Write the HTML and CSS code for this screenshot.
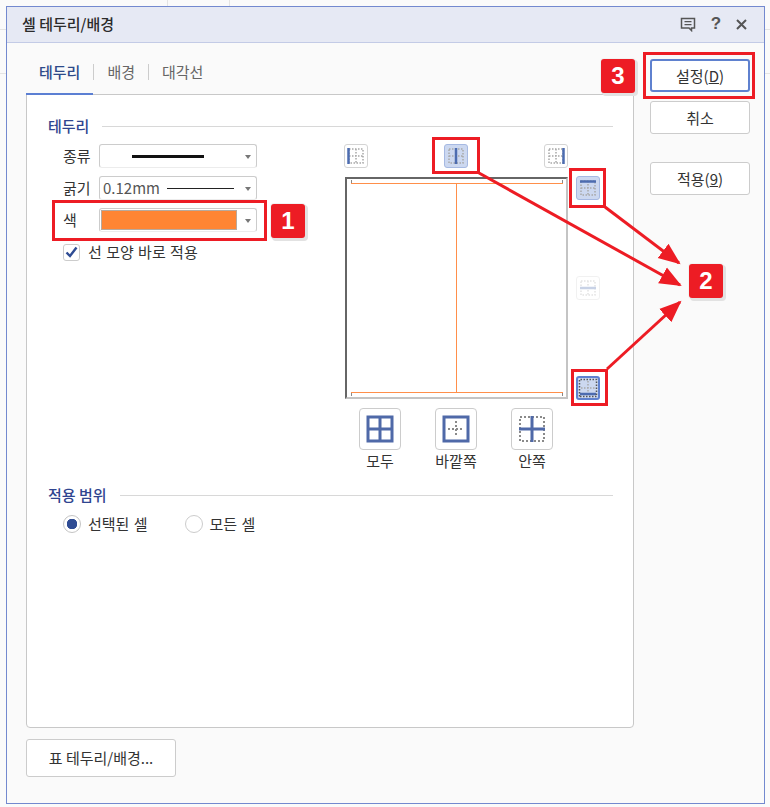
FILE: index.html
```html
<!DOCTYPE html>
<html>
  <head>
    <title>셀 테두리/배경</title>

    <link rel="stylesheet" href="styles.css">
  </head>
  <body>

    <div class="dialog">
      <div class="titlebar">
        <div class="title">셀 테두리/배경</div>
        <div class="title-icons">
          <svg class="icon-comment" width="16" height="15" viewBox="0 0 16 15">
            <path d="M1.5 1.5h13v9.5h-3v2.5l-2.5-2.5h-7.500z" fill="none" stroke="#555" stroke-width="1.500"/>
            <path d="M4.500 4.700h7M4.500 7.700h7" stroke="#555" stroke-width="1.300"/>
          </svg>
          <span class="icon-help">?</span>
          <svg class="icon-close" width="11" height="11" viewBox="0 0 11 11">
            <path d="M1 1l9 9M10 1l-9 9" stroke="#555" stroke-width="2"/>
          </svg>
        </div>
      </div>

      <div class="content">
        <div class="main">
          <div class="tabs">
            <div class="tab active">테두리</div>
            <span class="sep"></span>
            <div class="tab">배경</div>
            <span class="sep"></span>
            <div class="tab">대각선</div>
          </div>

          <div class="panel">
            <div class="legend"><span>테두리</span><i></i></div>

            <div class="border-area">
              <div class="fields">
                <div class="field">
                  <label>종류</label>
                  <div class="select"><div class="line-thick"></div><b class="caret"></b></div>
                </div>
                <div class="field">
                  <label>굵기</label>
                  <div class="select"><span class="size">0.12mm</span><div class="line-thin"></div><b class="caret"></b></div>
                </div>
                <div class="field">
                  <label>색</label>
                  <div class="select"><div class="swatch"></div><b class="caret"></b></div>
                </div>
                <div class="check-row">
                  <span class="checkbox">
                    <svg width="13" height="12" viewBox="0 0 13 12"><path d="M1.500 6.500l3.500 3.500 6.500-8.500" fill="none" stroke="#2f4c94" stroke-width="2.400"/></svg>
                  </span>
                  선 모양 바로 적용
                </div>
              </div>

              <div class="preview">
                <div class="top-icons">
                  <div class="ico">
                    <svg width="24" height="24" viewBox="0 0 24 24"><path class="dots" d="M5 5h14v14H5zM12 5v14M5 12h14"/><path class="solid" d="M4.500 4v16"/></svg>
                  </div>
                  <div class="ico on">
                    <svg width="24" height="24" viewBox="0 0 24 24"><path class="dots" d="M5 5h14v14H5zM5 12h14"/><path class="solid" d="M12 4v16"/></svg>
                  </div>
                  <div class="ico">
                    <svg width="24" height="24" viewBox="0 0 24 24"><path class="dots" d="M5 5h14v14H5zM12 5v14M5 12h14"/><path class="solid" d="M19.500 4v16"/></svg>
                  </div>
                </div>

                <div class="sheet">
                  <div class="rule-top"></div>
                  <div class="rule-mid"></div>
                  <div class="rule-bottom"></div>
                  <span class="tick tick-tl"></span>
                  <span class="tick tick-tr"></span>
                  <span class="tick tick-bl"></span>
                  <span class="tick tick-br"></span>
                </div>

                <div class="side-icons">
                  <div class="ico on">
                    <svg width="24" height="24" viewBox="0 0 24 24"><path class="dots" d="M5 5h14v14H5zM12 5v14M5 12h14"/><path class="solid" d="M4 5.500h16"/></svg>
                  </div>
                  <div class="ico off">
                    <svg width="24" height="24" viewBox="0 0 24 24"><path class="dots" d="M5 5h14v14H5zM12 5v14"/><path class="solid" d="M4 12h16"/></svg>
                  </div>
                  <div class="ico on strong">
                    <svg width="24" height="24" viewBox="0 0 24 24"><path class="solid" d="M4 18h16"/><path class="dots" d="M12 5v12M5 12h14"/><path class="dots dark" d="M3.500 20.500V3.500h17v17z"/></svg>
                  </div>
                </div>

                <div class="presets">
                  <div class="preset">
                    <div class="preset-btn">
                      <svg width="28" height="28" viewBox="0 0 28 28"><path class="solid wide" d="M2 2h24v24H2zM14 2v24M2 14h24"/></svg>
                    </div>
                    <span>모두</span>
                  </div>
                  <div class="preset">
                    <div class="preset-btn">
                      <svg width="28" height="28" viewBox="0 0 28 28"><path class="dots big" d="M14 6v16M6 14h16"/><path class="solid wide" d="M2 2h24v24H2z"/></svg>
                    </div>
                    <span>바깥쪽</span>
                  </div>
                  <div class="preset">
                    <div class="preset-btn">
                      <svg width="28" height="28" viewBox="0 0 28 28"><path class="dots big" d="M2 2h24v24H2z"/><path class="solid wide" d="M14 1v26M1 14h26"/></svg>
                    </div>
                    <span>안쪽</span>
                  </div>
                </div>
              </div>
            </div>

            <div class="legend legend-scope"><span>적용 범위</span><i></i></div>

            <div class="scope">
              <div class="radio-item"><span class="radio checked"></span>선택된 셀</div>
              <div class="radio-item"><span class="radio"></span>모든 셀</div>
            </div>
          </div>

          <button class="btn btn-table">표 테두리/배경...</button>
        </div>

        <div class="side">
          <button class="btn btn-default">설정(<u>D</u>)</button>
          <button class="btn">취소</button>
          <button class="btn btn-apply">적용(<u>9</u>)</button>
        </div>
      </div>
    </div>

    <svg class="notes" width="770" height="807" viewBox="0 0 770 807">
      <defs>
        <marker id="head" markerUnits="userSpaceOnUse" markerWidth="24" markerHeight="20" refX="20" refY="10" orient="auto">
          <path d="M0 1l22 9-22 9z" fill="#ed1c24"/>
        </marker>
      </defs>
      <rect x="53.500" y="201.500" width="212" height="38"/>
      <rect x="433.500" y="138.500" width="45" height="34"/>
      <rect x="570.500" y="169.500" width="34" height="37"/>
      <rect x="572.500" y="370.500" width="34" height="34"/>
      <rect x="644.500" y="53.500" width="109" height="44"/>
      <line x1="479" y1="173" x2="680" y2="285" marker-end="url(#head)"/>
      <line x1="605" y1="207" x2="679" y2="263" marker-end="url(#head)"/>
      <line x1="607" y1="369" x2="680" y2="302" marker-end="url(#head)"/>
    </svg>

    <div class="badge badge-1">1</div>
    <div class="badge badge-2">2</div>
    <div class="badge badge-3">3</div>

  </body>
</html>
```

FILE: styles.css
```css
html, body {
  margin: 0;
  height: 807px;
  overflow: hidden;
}

body {
  position: relative;
  box-sizing: border-box;
  padding: 6px 5px 3px 6px;
  color: #333333;
  font-family: "Noto Sans CJK KR", "Liberation Sans", sans-serif;
  font-size: 15px;
  line-height: 20px;
  background-color: #fafafa;
  background-image:
    linear-gradient(#e4e4e4, #e4e4e4),
    linear-gradient(#e4e4e4, #e4e4e4),
    linear-gradient(#e4e4e4, #e4e4e4),
    linear-gradient(#e4e4e4, #e4e4e4);
  background-size: 100% 1px, 100% 1px, 1px 6px, 1px 6px;
  background-position: 0 29px, 0 73px, 167px 0, 229px 0;
  background-repeat: no-repeat;
}

.dialog {
  box-sizing: border-box;
  height: 798px;
  display: flex;
  flex-direction: column;
  background-color: #fafafa;
  border: 1px solid #7389cf;
}

.titlebar {
  flex: none;
  height: 35px;
  display: flex;
  align-items: center;
  justify-content: space-between;
  padding: 0 15px;
  background-color: #e6e9f4;
  border-bottom: 1px solid #c3cbe6;
}

.title {
  font-weight: 500;
  color: #2b2b2b;
  margin-top: -2px;
}

.title-icons {
  display: flex;
  align-items: center;
  margin-top: -1px;
}

.icon-comment {
  margin-right: 13px;
}

.icon-help {
  width: 14px;
  margin-right: 13px;
  text-align: center;
  font: bold 17px/20px "Liberation Sans", sans-serif;
  color: #555555;
}

.icon-close {
  margin-right: 2px;
}

.content {
  flex: 1;
  display: flex;
}

.main {
  width: 608px;
  margin-left: 19px;
}

.tabs {
  height: 52px;
  display: flex;
  align-items: center;
}

.tab {
  box-sizing: border-box;
  height: 52px;
  padding: 19px 13px 0;
  color: #666666;
}

.tab.active {
  color: #2d4a8a;
  font-weight: 500;
  border-bottom: 2px solid #5b7fd3;
  position: relative;
  z-index: 1;
}

.sep {
  width: 1px;
  height: 16px;
  margin-top: 6px;
  background-color: #cccccc;
}

.panel {
  box-sizing: border-box;
  height: 634px;
  margin-top: -1px;
  padding: 22px 20px 0 21px;
  background-color: #ffffff;
  border: 1px solid #c8c8c8;
  border-radius: 0 0 4px 4px;
}

.legend {
  display: flex;
  align-items: center;
  height: 18px;
  color: #2f4590;
  font-weight: 500;
}

.legend i {
  flex: 1;
  height: 1px;
  margin-left: 13px;
  background-color: #d8d8d8;
}

.legend-scope {
  margin-top: 15px;
}

.border-area {
  display: flex;
  margin-top: 9px;
  padding-left: 15px;
}

.fields {
  width: 282px;
  flex: none;
}

.field {
  display: flex;
  align-items: center;
  height: 24px;
  margin-bottom: 8px;
}

.field label {
  width: 36px;
}

.select {
  box-sizing: border-box;
  position: relative;
  width: 158px;
  height: 24px;
  display: flex;
  align-items: center;
  background-color: #ffffff;
  border: 1px solid #cccccc;
  border-bottom-color: #ececec;
  border-radius: 3px;
}

.caret {
  position: absolute;
  right: 5px;
  top: 10px;
  border-top: 4px solid #777777;
  border-left: 3px solid transparent;
  border-right: 3px solid transparent;
}

.line-thick {
  width: 72px;
  height: 3px;
  margin-left: 32px;
  background-color: #111111;
}

.size {
  margin-left: 3px;
  color: #555555;
}

.line-thin {
  width: 67px;
  height: 1px;
  margin-left: 7px;
  background-color: #222222;
}

.swatch {
  box-sizing: border-box;
  width: 136px;
  height: 20px;
  margin-left: 1px;
  background-color: #ff8533;
  border: 1px solid #b8a99c;
}

.check-row {
  display: flex;
  align-items: center;
  height: 18px;
  margin-top: 11px;
  word-spacing: 1px;
}

.checkbox {
  box-sizing: border-box;
  width: 17px;
  height: 17px;
  display: flex;
  align-items: center;
  justify-content: center;
  margin-right: 8px;
  background-color: #ffffff;
  border: 1px solid #cccccc;
  border-radius: 3px;
}

.preview {
  display: grid;
  grid-template-columns: 223px 24px;
  grid-template-rows: 24px 222px auto;
  column-gap: 8px;
  row-gap: 9px;
}

.top-icons {
  grid-column: 1;
  grid-row: 1;
  display: flex;
  justify-content: space-between;
  margin-left: -1px;
}

.sheet {
  grid-column: 1;
  grid-row: 2;
  position: relative;
  box-sizing: border-box;
  background-color: #ffffff;
  border: 2px solid #c4c4c4;
  border-top: 2px solid #666666;
  border-left: 2px solid #666666;
}

.side-icons {
  grid-column: 2;
  grid-row: 2;
  display: flex;
  flex-direction: column;
  justify-content: space-between;
  margin: -1px 0;
}

.ico {
  box-sizing: border-box;
  width: 24px;
  height: 24px;
  background-color: #ffffff;
  border: 1px solid #d4d4d4;
  border-radius: 3px;
}

.ico svg {
  display: block;
  margin: -1px;
}

.ico.on {
  background-color: #ccd8f0;
  border-color: #a6b9e2;
}

.ico.off {
  opacity: 0.3;
}

.ico.strong {
  border: 2px solid #5f81cf;
}

.ico.strong svg {
  margin: -2px;
}

.dots {
  fill: none;
  stroke: #a8a8a8;
  stroke-width: 1.500;
  stroke-dasharray: 1.500 1.500;
}

.dots.dark {
  stroke: #555555;
}

.dots.big {
  stroke: #8a8a8a;
  stroke-width: 2;
  stroke-dasharray: 2 2;
}

.solid {
  fill: none;
  stroke: #4d6cb0;
  stroke-width: 2.500;
}

.solid.wide {
  stroke: #4f69a8;
  stroke-width: 3;
}

.rule-top, .rule-bottom {
  position: absolute;
  left: 4px;
  right: 3px;
  height: 1px;
  background-color: #ff8f4a;
}

.rule-top {
  top: 4px;
}

.rule-bottom {
  bottom: 4px;
}

.rule-mid {
  position: absolute;
  left: 109px;
  top: 4px;
  bottom: 4px;
  width: 1px;
  background-color: #ff8f4a;
}

.tick {
  position: absolute;
  width: 1px;
  height: 3px;
  background-color: #888888;
}

.tick-tl {
  left: 4px;
  top: 1px;
}

.tick-tr {
  right: 3px;
  top: 1px;
}

.tick-bl {
  left: 4px;
  bottom: 1px;
}

.tick-br {
  right: 3px;
  bottom: 1px;
}

.presets {
  grid-column: 1 / 3;
  grid-row: 3;
  display: flex;
  gap: 34px;
  margin-top: 0;
  padding-left: 14px;
}

.preset {
  width: 42px;
  display: flex;
  flex-direction: column;
  align-items: center;
  white-space: nowrap;
}

.preset span {
  margin-top: 1px;
}

.preset-btn {
  box-sizing: border-box;
  width: 42px;
  height: 42px;
  display: flex;
  align-items: center;
  justify-content: center;
  background-color: #ffffff;
  border: 1px solid #cccccc;
  border-radius: 4px;
}

.scope {
  display: flex;
  gap: 37px;
  margin-top: 11px;
  padding-left: 15px;
  word-spacing: 1px;
}

.radio-item {
  display: flex;
  align-items: center;
  height: 18px;
}

.radio {
  box-sizing: border-box;
  width: 18px;
  height: 18px;
  margin-right: 7px;
  background-color: #ffffff;
  border: 1px solid #cccccc;
  border-radius: 50%;
}

.radio.checked {
  border-color: #c4c4c4;
  background: radial-gradient(circle, #2f4c94 0, #2f4c94 5px, #ffffff 5.500px);
}

.btn {
  box-sizing: border-box;
  display: block;
  padding: 0;
  color: #333333;
  font: inherit;
  background-color: #ffffff;
  border: 1px solid #cccccc;
  border-radius: 3px;
}

.btn-table {
  width: 150px;
  height: 38px;
  margin-top: 11px;
}

.side {
  width: 100px;
  margin-left: 16px;
  padding-top: 16px;
}

.side .btn {
  width: 100px;
  height: 33px;
  margin-bottom: 9px;
}

.side .btn-default {
  border: 2px solid #5f81cf;
}

.side .btn-apply {
  margin-top: 28px;
}

.notes {
  position: absolute;
  left: 0;
  top: 0;
}

.notes rect {
  fill: none;
  stroke: #ed1c24;
  stroke-width: 3;
}

.notes line {
  stroke: #ed1c24;
  stroke-width: 3;
}

.badge {
  position: absolute;
  width: 34px;
  height: 34px;
  color: #ffffff;
  font: bold 24px/34px "Liberation Sans", sans-serif;
  text-align: center;
  background-color: #ed1c24;
  border-radius: 3px;
  box-shadow: 2px 2px 0 1px #e2e2e2, 0 0 0 1px #f2f2f2;
}

.badge-1 {
  left: 271px;
  top: 204px;
}

.badge-2 {
  left: 689px;
  top: 264px;
}

.badge-3 {
  left: 601px;
  top: 59px;
}
```
